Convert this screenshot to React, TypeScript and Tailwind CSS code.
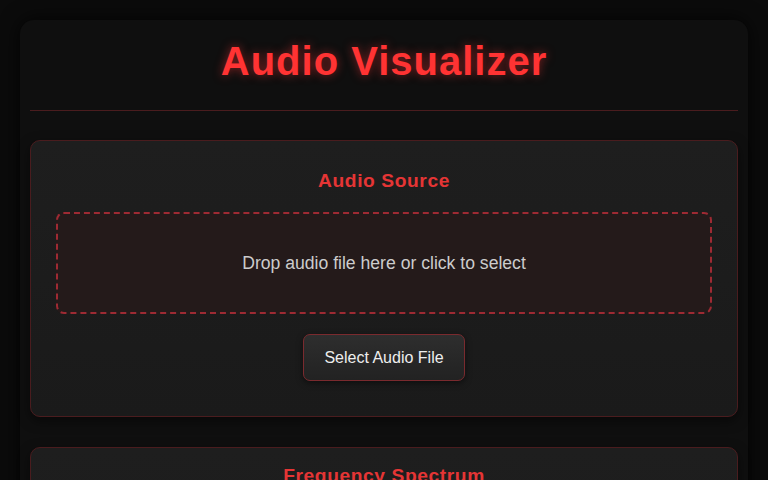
import React from "react";

const font = { fontFamily: '"Liberation Sans", Arial, sans-serif' };

function SectionCard({
  title,
  top = "pt-[28px]",
  children,
}: {
  title: string;
  top?: string;
  children?: React.ReactNode;
}) {
  return (
    <section
      className={`rounded-[10px] border border-[#4a1c1e] bg-gradient-to-b from-[#1e1e1e] to-[#1a1a1a] px-[25px] pb-[35px] mb-[30px] shadow-[0_4px_12px_rgba(0,0,0,0.5)] ${top}`}
    >
      <h2 className="text-center text-[19.2px] font-bold tracking-[0.6px] text-[#e53535] leading-[24px] mb-[19px]">
        {title}
      </h2>
      {children}
    </section>
  );
}

export default function App() {
  return (
    <div
      className="min-h-screen bg-[#0b0b0b] px-[20px] pt-[20px] overflow-hidden"
      style={font}
    >
      <div className="rounded-[14px] bg-[#0f0f0f] px-[10px] shadow-[0_0_20px_rgba(0,0,0,0.8)]">
        <header className="border-b border-[#4a1c1e] pt-[16px] pb-[24px] mb-[29px]">
          <h1 className="text-center text-[40px] leading-[50px] font-bold tracking-[1px] text-[#ff3333] [text-shadow:0_0_10px_rgba(255,51,51,0.5)]">
            Audio Visualizer
          </h1>
        </header>

        <SectionCard title="Audio Source">
          <div className="flex h-[102px] items-center justify-center rounded-[8px] border-2 border-dashed border-[#9e2a33] bg-[#241a1a]">
            <p className="text-[17.6px] text-[#cccccc]">Drop audio file here or click to select</p>
          </div>
          <div className="mt-[20px] flex justify-center">
            <button className="h-[47px] rounded-[7px] border border-[#7a2a2e] bg-gradient-to-b from-[#2e2e2e] to-[#222222] px-[20px] text-[16px] text-[#eeeeee] shadow-[0_2px_6px_rgba(0,0,0,0.5)]">
              Select Audio File
            </button>
          </div>
        </SectionCard>

        <SectionCard title="Frequency Spectrum" top="pt-[16px]">
          <div className="h-[200px] rounded-[8px] bg-[#111]" />
        </SectionCard>
      </div>
    </div>
  );
}
